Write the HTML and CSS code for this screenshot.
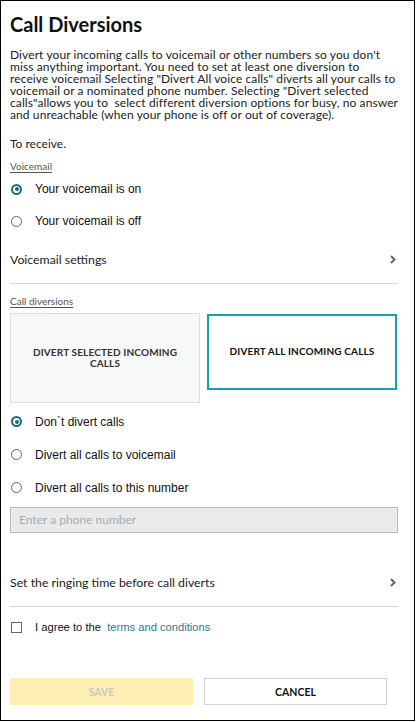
FILE: index.html
```html
<!DOCTYPE html>
<html lang="en">
<head>
<meta charset="utf-8">
<title>Call Diversions</title>
<link rel="stylesheet" href="styles.css">
</head>
<body>
<div class="frame">
  <h1 class="title">Call Diversions</h1>
  <p class="desc">Divert your incoming calls to voicemail or other numbers so you don't miss anything important. You need to set at least one diversion to receive voicemail Selecting "Divert All voice calls" diverts all your calls to voicemail or a nominated phone number. Selecting "Divert selected calls"allows you to &nbsp;select different diversion options for busy, no answer and unreachable (when your phone is off or out of coverage).</p>
  <p class="receive">To receive.</p>
  <div class="section-label">Voicemail</div>
  <div class="radio-row vm"><span class="radio checked"></span><span class="radio-text">Your voicemail is on</span></div>
  <div class="radio-row vm"><span class="radio"></span><span class="radio-text">Your voicemail is off</span></div>
  <div class="nav-row first-nav"><span>Voicemail settings</span>
    <svg class="chev" width="6" height="9" viewBox="0 0 6 9"><path d="M1 1 L4.5 4.5 L1 8" fill="none" stroke="#666" stroke-width="2"/></svg>
  </div>
  <div class="section-label calls-label">Call diversions</div>
  <div class="tiles">
    <div class="tile tile-off">DIVERT SELECTED INCOMING<br>CALLS</div>
    <div class="tile tile-on">DIVERT ALL INCOMING CALLS</div>
  </div>
  <div class="dv-group">
    <div class="radio-row dv"><span class="radio checked"></span><span class="radio-text">Don`t divert calls</span></div>
    <div class="radio-row dv"><span class="radio"></span><span class="radio-text">Divert all calls to voicemail</span></div>
    <div class="radio-row dv"><span class="radio"></span><span class="radio-text">Divert all calls to this number</span></div>
  </div>
  <div class="phone-input">Enter a phone number</div>
  <div class="nav-row ring-nav"><span>Set the ringing time before call diverts</span>
    <svg class="chev" width="6" height="9" viewBox="0 0 6 9"><path d="M1 1 L4.5 4.5 L1 8" fill="none" stroke="#666" stroke-width="2"/></svg>
  </div>
  <div class="agree-row"><span class="checkbox"></span><span class="agree-text">I agree to the&nbsp; <a class="link">terms and conditions</a></span></div>
  <div class="buttons">
    <div class="btn btn-save">SAVE</div>
    <div class="btn btn-cancel">CANCEL</div>
  </div>
</div>
</body>
</html>
```
FILE: styles.css
```css
html, body {
  margin: 0;
  padding: 0;
  background: #fff;
}
.frame {
  box-sizing: border-box;
  width: 415px;
  height: 721px;
  border: 1px solid #000;
  padding: 0 16px 0 9px;
  font-family: "Lato", "Liberation Sans", sans-serif;
  color: #222;
  display: flex;
  flex-direction: column;
}
.title {
  margin: 11px 0 0;
  font-size: 20px;
  line-height: 24px;
  font-weight: 700;
  color: #111;
}
.desc {
  margin: 13px 0 0;
  font-size: 12px;
  line-height: 12px;
  letter-spacing: 0.1px;
  color: #222;
}
.receive {
  margin: 15px 0 0;
  font-size: 12px;
  line-height: 16px;
}
.section-label {
  margin-top: 7px;
  font-size: 10px;
  line-height: 14px;
  color: #555;
  text-decoration: underline;
  text-underline-offset: 2px;
}
.calls-label {
  margin-top: 10px;
}
.radio-row {
  display: flex;
  align-items: center;
  height: 32px;
  font-family: "Liberation Sans", Arial, sans-serif;
  font-size: 12px;
  color: #111;
}
.dv-group {
  margin-top: 2px;
}
.radio-row.dv {
  height: 33px;
}
.radio {
  box-sizing: border-box;
  width: 11px;
  height: 11px;
  border: 1.5px solid #666;
  border-radius: 50%;
  margin-left: 1px;
  margin-right: 13px;
  flex: none;
  position: relative;
}
.radio.checked {
  border: 2px solid #1c6a7c;
}
.radio.checked::after {
  content: "";
  position: absolute;
  left: 1.5px;
  top: 1.5px;
  width: 4px;
  height: 4px;
  border-radius: 50%;
  background: #1c6a7c;
}
.nav-row {
  display: flex;
  align-items: center;
  justify-content: space-between;
  height: 47px;
  padding-bottom: 2px;
  border-bottom: 1px solid #d8d8d8;
  font-size: 12.3px;
  color: #222;
  box-sizing: border-box;
}
.chev {
  margin-right: 2px;
}
.tiles {
  display: grid;
  grid-template-columns: 190px 190px;
  column-gap: 7px;
  align-items: start;
  margin-top: 5px;
}
.tile {
  box-sizing: border-box;
  display: flex;
  align-items: center;
  justify-content: center;
  text-align: center;
  font-size: 10px;
  line-height: 11.5px;
  font-weight: 700;
  color: #333;
  letter-spacing: 0.15px;
}
.tile-off {
  height: 90px;
  background: #f7f8f8;
  border: 1px solid #dcdfe0;
}
.tile-on {
  height: 76px;
  margin-top: 1px;
  background: #fff;
  border: 2px solid #17a2a9;
  color: #111;
}
.phone-input {
  box-sizing: border-box;
  margin-top: 3px;
  height: 26px;
  background: #e8eaec;
  border: 1px solid #b8bbbd;
  font-size: 12px;
  line-height: 24px;
  padding-left: 8px;
  color: #a9acae;
}
.ring-nav {
  margin-top: 26px;
  height: 48px;
  padding-bottom: 0;
}
.agree-row {
  display: flex;
  align-items: center;
  height: 40px;
  font-family: "Liberation Sans", Arial, sans-serif;
  font-size: 11.2px;
  color: #111;
}
.checkbox {
  box-sizing: border-box;
  width: 11px;
  height: 11px;
  border: 1.5px solid #666;
  margin-right: 13px;
  margin-left: 1px;
  flex: none;
}
.link {
  color: #2d7a8e;
}
.buttons {
  display: flex;
  gap: 11px;
  margin-top: 31px;
}
.btn {
  box-sizing: border-box;
  width: 183px;
  height: 27px;
  display: flex;
  align-items: center;
  justify-content: center;
  font-size: 10.5px;
  font-weight: 700;
}
.btn-save {
  background: #fdeeb3;
  color: #c9c9c4;
}
.btn-cancel {
  border: 1.5px solid #cfd3d5;
  color: #111;
}
```
